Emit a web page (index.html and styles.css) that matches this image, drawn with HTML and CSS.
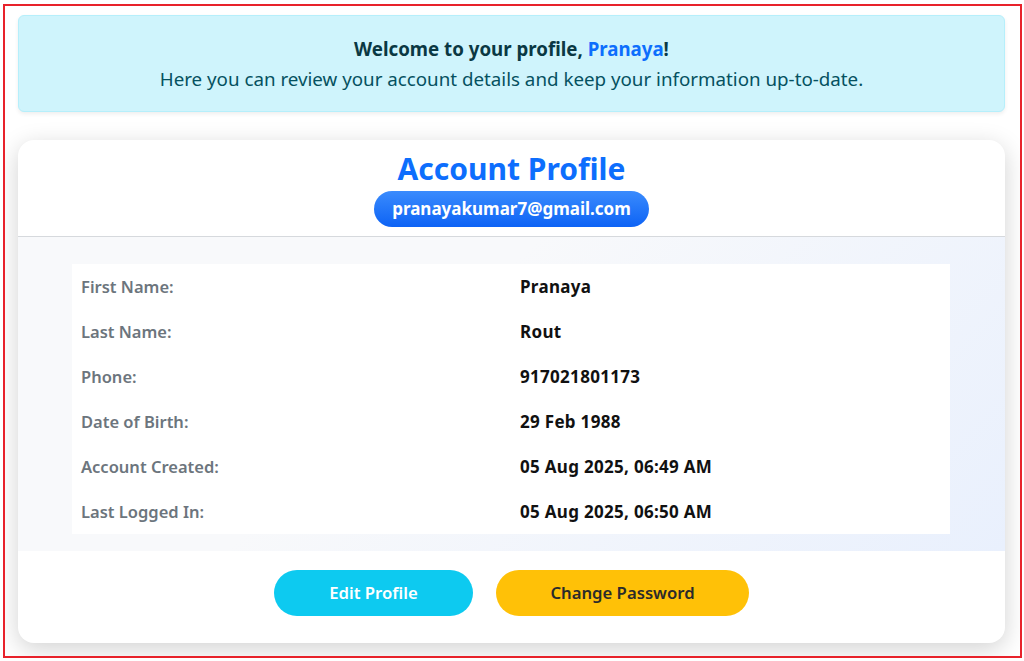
FILE: index.html
```html
<!DOCTYPE html>
<html lang="en">
<head>
  <meta charset="UTF-8" />
  <title>Account Profile</title>
  <link rel="stylesheet" href="styles.css">
</head>
<body>
  <div class="frame">
    <div class="welcome">
      <div class="welcome-title">Welcome to your profile, <span class="name">Pranaya</span>!</div>
      <div class="welcome-text">Here you can review your account details and keep your information up-to-date.</div>
    </div>

    <div class="card">
      <div class="card-header">
        <h2>Account Profile</h2>
        <span class="email">pranayakumar7@gmail.com</span>
      </div>
      <div class="card-body">
        <table class="details">
          <tr><th>First Name:</th><td>Pranaya</td></tr>
          <tr><th>Last Name:</th><td>Rout</td></tr>
          <tr><th>Phone:</th><td>917021801173</td></tr>
          <tr><th>Date of Birth:</th><td>29 Feb 1988</td></tr>
          <tr><th>Account Created:</th><td>05 Aug 2025, 06:49 AM</td></tr>
          <tr><th>Last Logged In:</th><td>05 Aug 2025, 06:50 AM</td></tr>
        </table>
      </div>
      <div class="card-footer">
        <a href="#" class="btn btn-edit">Edit Profile</a>
        <a href="#" class="btn btn-pass">Change Password</a>
      </div>
    </div>
  </div>
</body>
</html>
```

FILE: styles.css
```css
body {
  margin: 0;
  background: #fff;
  font-family: 'Noto Sans', 'Open Sans', sans-serif;
}
.frame {
  box-sizing: border-box;
  width: 1019px;
  height: 654px;
  margin: 4px 0 0 3px;
  border: 2px solid #e8222b;
  padding: 9px 15px 0 13px;
  overflow: hidden;
}
.welcome {
  box-sizing: border-box;
  height: 97px;
  background: #cff4fc;
  border: 1px solid #b6effb;
  border-radius: 6px;
  box-shadow: 0 2px 4px rgba(0, 0, 0, 0.07);
  text-align: center;
  padding-top: 18px;
  color: #055160;
}
.welcome-title {
  font-size: 18.7px;
  font-weight: bold;
  color: #0a3843;
  line-height: 30px;
}
.welcome-title .name {
  color: #0d6efd;
}
.welcome-text {
  font-size: 18.75px;
  line-height: 30px;
}
.card {
  margin-top: 28px;
  height: 503px;
  background: #fff;
  border-radius: 16px;
  box-shadow: 0 6px 24px rgba(0, 0, 0, 0.18);
  display: flex;
  flex-direction: column;
  overflow: hidden;
}
.card-header {
  text-align: center;
  padding: 11px 0 9px;
  border-bottom: 1px solid #d6d9dd;
}
.card-header h2 {
  margin: 0;
  font-size: 30px;
  line-height: 36px;
  color: #0d6efd;
}
.email {
  display: inline-block;
  margin-top: 4px;
  height: 36px;
  line-height: 36px;
  padding: 0 18px;
  border-radius: 18px;
  background: linear-gradient(180deg, #3a8bfd, #0d63f5);
  color: #fff;
  font-weight: bold;
  font-size: 17px;
}
.card-body {
  padding: 27px 55px 17px 54px;
  background: linear-gradient(135deg, #f8f9fb 40%, #e9f0fd 100%);
}
.details {
  width: 100%;
  border-collapse: collapse;
  background: #fff;
  table-layout: fixed;
}
.details th,
.details td {
  height: 45px;
  padding: 0 9px;
  text-align: left;
}
.details th {
  color: #6c757d;
  font-weight: 600;
  font-size: 16.5px;
}
.details td {
  color: #111;
  font-weight: bold;
  font-size: 17px;
  letter-spacing: 0.3px;
}
.card-footer {
  flex-grow: 1;
  display: flex;
  justify-content: center;
  align-items: flex-start;
  gap: 23px;
  padding-top: 19px;
}
.btn {
  display: block;
  height: 46px;
  line-height: 46px;
  border-radius: 23px;
  text-align: center;
  text-decoration: none;
  font-size: 16.7px;
  font-weight: 600;
}
.btn-edit {
  width: 199px;
  background: #0dcaf0;
  color: #fff;
}
.btn-pass {
  width: 253px;
  background: #ffc107;
  color: #2b2b2b;
}
```
